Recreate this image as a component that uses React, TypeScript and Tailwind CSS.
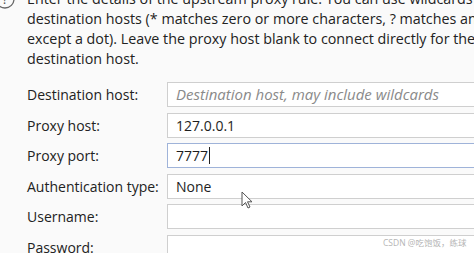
const font = { fontFamily: '"Open Sans", "Noto Sans CJK SC", sans-serif' }

function Field({ label, children, focused }: { label: string; children?: React.ReactNode; focused?: boolean }) {
  return (
    <div className="flex h-[25px] items-center">
      <div className="w-[140px] shrink-0 text-[14px] text-[#222]">{label}</div>
      <div
        className={
          'flex h-full w-[330px] shrink-0 items-center border bg-white px-[8px] text-[14px] text-[#1e1e1e] ' +
          (focused ? 'border-[#9fb3d9]' : 'border-[#cfcfcf]')
        }
      >
        {children}
      </div>
    </div>
  )
}

export default function App() {
  return (
    <div className="relative h-[253px] w-[474px] overflow-hidden bg-[#fafafa]" style={font}>
      <svg className="absolute left-[-6px] top-[-12px]" width="22" height="22" viewBox="0 0 22 22">
        <circle cx="11" cy="11" r="9" fill="none" stroke="#666" strokeWidth="1.3" />
        <text x="11" y="16" textAnchor="middle" fontSize="13" fill="#555">?</text>
      </svg>
      <div className="-mt-[11px] whitespace-nowrap pl-[27px] text-[14.3px] leading-[20px] text-[#222]">
        <div>Enter the details of the upstream proxy rule. You can use wildcards in</div>
        <div>destination hosts (* matches zero or more characters, ? matches any character</div>
        <div>except a dot). Leave the proxy host blank to connect directly for the</div>
        <div>destination host.</div>
      </div>
      <div className="mt-[13px] flex flex-col gap-[5.5px] pl-[27px]">
        <Field label="Destination host:">
          <span className="text-[15px] italic text-[#8a8a8a]">Destination host, may include wildcards</span>
        </Field>
        <Field label="Proxy host:">127.0.0.1</Field>
        <Field label="Proxy port:" focused>
          7777<span className="ml-[1px] inline-block h-[17px] w-px bg-[#222]" />
        </Field>
        <Field label="Authentication type:">None</Field>
        <Field label="Username:" />
        <Field label="Password:" />
      </div>
      <svg className="absolute left-[241px] top-[191px]" width="12" height="19" viewBox="0 0 12 19">
        <path d="M1 1 L1 15 L4.5 11.5 L7 17 L9 16 L6.5 10.8 L11 10.8 Z" fill="#fff" stroke="#555" strokeWidth="1" strokeLinejoin="round" />
      </svg>
      <div className="absolute left-[383px] top-[237px] text-[8.5px] text-[#b5b5b5]">CSDN @吃饱饭，练球</div>
    </div>
  )
}
